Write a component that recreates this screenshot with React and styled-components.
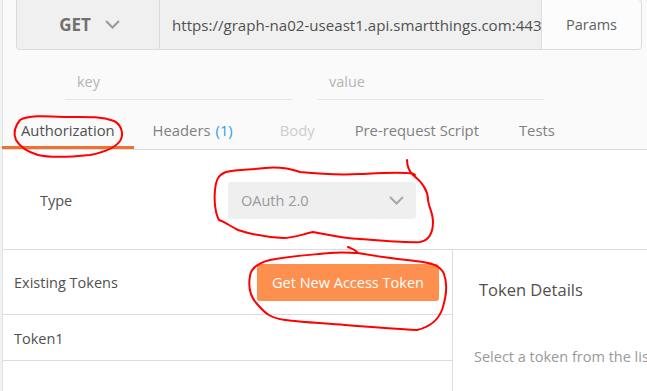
import React from 'react';
import styled, { createGlobalStyle } from 'styled-components';

const GlobalStyle = createGlobalStyle`
  html, body {
    margin: 0;
    padding: 0;
    background: #ffffff;
    font-family: "Open Sans", "DejaVu Sans", sans-serif;
    overflow: hidden;
  }
  * { box-sizing: border-box; }
`;

const Page = styled.div`
  position: relative;
  display: flex;
  width: 647px;
  height: 391px;
  overflow: hidden;
`;

const SideStrip = styled.div`
  width: 3px;
  flex: none;
  background: #f2f2f2;
  border-right: 1px solid #e3e3e3;
`;

const Main = styled.div`
  flex: 1;
  display: flex;
  flex-direction: column;
  min-width: 0;
`;

const Top = styled.div`
  background: #fafafa;
  border-bottom: 1px solid #dcdcdc;
`;

const UrlBar = styled.div`
  display: flex;
  height: 51px;
  padding: 0 5px 0 13px;
  margin-top: -1px;
`;

const Method = styled.div`
  width: 144px;
  display: flex;
  align-items: center;
  justify-content: center;
  gap: 14px;
  background: #f0f0f0;
  border: 1px solid #dcdcdc;
  border-radius: 0 0 0 4px;
  color: #707070;
  font-weight: 700;
  font-size: 17px;
  padding-left: 3px;
`;

const Url = styled.div`
  flex: 1;
  display: flex;
  align-items: center;
  padding-left: 12px;
  background: #f0f0f0;
  border-top: 1px solid #dcdcdc;
  border-bottom: 1px solid #dcdcdc;
  color: #505050;
  font-size: 15.1px;
  white-space: nowrap;
  overflow: hidden;
`;

const ParamsButton = styled.div`
  width: 101px;
  display: flex;
  align-items: center;
  justify-content: center;
  background: #fcfcfc;
  border: 1px solid #dcdcdc;
  border-radius: 0 4px 4px 0;
  color: #606060;
  font-size: 14.5px;
`;

const KeyValueRow = styled.div`
  display: flex;
  gap: 25px;
  padding-left: 62px;
  height: 59px;
`;

const KvField = styled.div`
  width: 227px;
  height: 50px;
  display: flex;
  align-items: center;
  padding-left: 12px;
  padding-top: 14px;
  border-bottom: 1px solid #e6e6e6;
  color: #b4b4b4;
  font-size: 14.5px;
`;

const Tabs = styled.div`
  display: flex;
  height: 40px;
  margin-left: -1px;
`;

const Tab = styled.div`
  display: flex;
  align-items: center;
  padding: 4px ${p => p.$right || 20}px 0 ${p => p.$left || 20}px;
  font-size: 14.8px;
  color: ${p => (p.$disabled ? '#cccccc' : p.$active ? '#505050' : '#808080')};
  border-bottom: 3px solid ${p => (p.$active ? '#f0702e' : 'transparent')};
  white-space: nowrap;
`;

const Count = styled.span`
  color: #2a9fdc;
  margin-left: 5px;
`;

const TypeRow = styled.div`
  display: flex;
  align-items: center;
  height: 100px;
  padding: 2px 0 0 37px;
  border-bottom: 1px solid #dcdcdc;
`;

const Label = styled.div`
  width: 188px;
  color: #505050;
  font-size: 14.5px;
`;

const Select = styled.div`
  width: 188px;
  height: 37px;
  display: flex;
  align-items: center;
  justify-content: space-between;
  padding: 0 12px 0 13px;
  background: #efefef;
  border-radius: 3px;
  color: #9a9a9a;
  font-size: 14.5px;
`;

const Tokens = styled.div`
  flex: 1;
  display: flex;
`;

const TokenList = styled.div`
  width: 450px;
  flex: none;
  border-right: 1px solid #dcdcdc;
`;

const ListHeader = styled.div`
  display: flex;
  align-items: center;
  justify-content: space-between;
  height: 65px;
  padding: 0 13px 0 11px;
  border-bottom: 1px solid #dcdcdc;
  color: #505050;
  font-size: 14.5px;
`;

const OrangeButton = styled.div`
  width: 182px;
  height: 37px;
  display: flex;
  align-items: center;
  justify-content: center;
  background: #fd8f4f;
  border-radius: 3px;
  color: #ffffff;
  font-size: 14.5px;
`;

const TokenRow = styled.div`
  height: 46px;
  display: flex;
  align-items: center;
  padding: 2px 0 0 11px;
  border-bottom: 1px solid #dcdcdc;
  color: #505050;
  font-size: 14.5px;
`;

const Details = styled.div`
  flex: 1;
  padding: 28px 0 0 26px;
  white-space: nowrap;
  overflow: hidden;
`;

const DetailsTitle = styled.div`
  color: #505050;
  font-size: 16.5px;
  height: 69px;
`;

const Hint = styled.div`
  color: #9a9a9a;
  font-size: 14.5px;
  margin-left: -5px;
`;

const Marks = styled.svg`
  position: absolute;
  left: 0;
  top: 0;
  pointer-events: none;
`;

const Chevron = ({ color }) => (
  <svg width="15" height="9" viewBox="0 0 15 9">
    <path d="M1 1 L7.5 7.5 L14 1" fill="none" stroke={color} strokeWidth="2" />
  </svg>
);

const Annotations = () => (
  <Marks width="647" height="391" viewBox="0 0 647 391">
    <g fill="none" stroke="#ff0000" strokeWidth="2" strokeLinecap="round" strokeLinejoin="round">
      <path d="M20 120 C28 115 45 116 67 117 C85 117 100 116 114 121 C122 125 124 135 120 141 C115 148 105 152 90 155 C70 157 50 158 38 155 C28 152 20 147 16 140 C13 133 15 126 20 120" />
      <path d="M407 160 C407 165 408 170 413 175 C422 182 428 190 428 200 C429 208 433 213 433 222 C433 232 430 240 420 242 C405 243 385 241 360 239 C340 238 330 235 313 232 C300 235 293 238 283 238 C265 237 250 234 238 230 C230 226 225 222 219 220 C215 213 214 200 215 190 C216 180 218 175 226 172 C238 169 250 170 265 168 C275 167 285 167 300 172 C320 174 340 175 360 174 C380 173 395 172 407 173 C412 173 414 174 415 175" />
      <path d="M348 247 C352 249 356 250 358 253 C350 253 343 252 330 253 C310 255 290 256 270 260 C258 263 251 268 250 276 C248 287 250 297 258 305 C265 313 270 318 285 320 C300 322 320 323 345 325 C370 327 395 329 417 330 C430 327 438 320 442 310 C446 298 448 285 444 274 C440 265 432 263 415 261 C398 259 380 257 358 253" />
    </g>
  </Marks>
);

export default function App() {
  return (
    <>
      <GlobalStyle />
      <Page>
        <SideStrip />
        <Main>
          <Top>
            <UrlBar>
              <Method>
                GET
                <Chevron color="#9a9a9a" />
              </Method>
              <Url>https://graph-na02-useast1.api.smartthings.com:443</Url>
              <ParamsButton>Params</ParamsButton>
            </UrlBar>
            <KeyValueRow>
              <KvField>key</KvField>
              <KvField>value</KvField>
            </KeyValueRow>
            <Tabs>
              <Tab $active $left={19} $right={19}>Authorization</Tab>
              <Tab $left={19} $right={27}>
                Headers<Count>(1)</Count>
              </Tab>
              <Tab $disabled>Body</Tab>
              <Tab>Pre-request Script</Tab>
              <Tab>Tests</Tab>
            </Tabs>
          </Top>
          <TypeRow>
            <Label>Type</Label>
            <Select>
              OAuth 2.0
              <Chevron color="#a8a8a8" />
            </Select>
          </TypeRow>
          <Tokens>
            <TokenList>
              <ListHeader>
                Existing Tokens
                <OrangeButton>Get New Access Token</OrangeButton>
              </ListHeader>
              <TokenRow>Token1</TokenRow>
            </TokenList>
            <Details>
              <DetailsTitle>Token Details</DetailsTitle>
              <Hint>Select a token from the list</Hint>
            </Details>
          </Tokens>
        </Main>
        <Annotations />
      </Page>
    </>
  );
}
